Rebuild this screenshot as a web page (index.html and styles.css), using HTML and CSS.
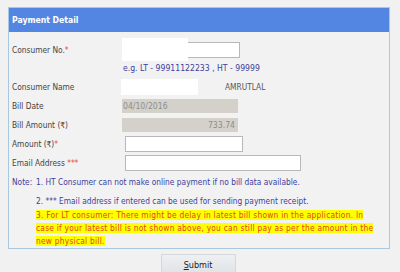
FILE: index.html
```html
<!DOCTYPE html>
<html lang="en">
<head>
  <meta charset="UTF-8">
  <title>Payment Detail</title>
  <link rel="stylesheet" href="styles.css">
</head>
<body>

  <div class="panel">
    <div class="panel-head">Payment Detail</div>
    <div class="panel-body">
      <div class="row">
        <label class="lbl">Consumer No.<span class="req">*</span></label>
        <div class="masked">
          <input type="text" class="txt w-short">
          <span class="mask mask-no"></span>
        </div>
      </div>
      <div class="row hint">e.g. LT - 99911122233 , HT - 99999</div>
      <div class="row">
        <label class="lbl">Consumer Name</label>
        <span class="mask-name"></span>
        <span class="name">AMRUTLAL</span>
      </div>
      <div class="row">
        <label class="lbl">Bill Date</label>
        <span class="ro">04/10/2016</span>
      </div>
      <div class="row">
        <label class="lbl">Bill Amount (&#8377;)</label>
        <span class="ro num">733.74</span>
      </div>
      <div class="row">
        <label class="lbl">Amount (&#8377;)<span class="req">*</span></label>
        <input type="text" class="txt w-short pushed">
      </div>
      <div class="row">
        <label class="lbl">Email Address <span class="req">***</span></label>
        <input type="text" class="txt w-long pushed">
      </div>

      <div class="notes">
        <div class="note"><span class="note-tag">Note:</span><span>1. HT Consumer can not make online payment if no bill data available.</span></div>
        <div class="note indent">2. *** Email address if entered can be used for sending payment receipt.</div>
        <div class="note indent warn"><span class="hl">3. For LT consumer: There might be delay in latest bill shown in the application. In case if your latest bill is not shown above, you can still pay as per the amount in the new physical bill.</span></div>
      </div>
    </div>
  </div>

  <div class="actions">
    <button type="button" class="btn"><u>S</u>ubmit</button>
  </div>

</body>
</html>
```

FILE: styles.css
```css
* { margin:0; padding:0; box-sizing:border-box; }
body {
  background:#f1f1f1;
  font-family: "DejaVu Sans Condensed", "DejaVu Sans", sans-serif;
  font-size: 8.3px;
  color:#444;
}

/* panel */
.panel {
  margin: 7px 0 0 8px;
  width: 382px;
  border: 1px solid #a9c7de;
  background:#f2f2f2;
}
.panel-head {
  background:#5385e2;
  color:#fff;
  font-weight:bold;
  height: 24px;
  line-height: 24px;
  padding-left: 3px;
  font-size: 8.6px;
}
.panel-body { padding: 8px 0 0 3px; }

/* rows */
.row {
  display:flex;
  align-items:center;
  height: 19px;
}
.lbl { width: 110px; flex-shrink:0; }
.req { color:#e8473b; }
.hint { padding-left: 111px; color:#3e3e9c; font-size: 8.6px; height: 18px; }

.txt {
  height: 16px;
  border: 1px solid #b8b8b8;
  background:#fff;
  font: inherit;
}
.w-short { width: 118px; }
.w-long { width: 176px; }
.pushed { margin-left: 3px; }

.masked { position: relative; }
.mask {
  position:absolute;
  background:#fff;
}
.mask-no { left:0; top:-4px; width:66px; height:23px; }

.mask-name {
  width: 77px;
  height: 16px;
  background:#fff;
  margin-left: -1px;
}
.name { margin-left: 27px; color:#555; }

.ro {
  width: 116px;
  height: 14px;
  line-height: 14px;
  background:#d4d1cb;
  color:#8d8d8d;
  padding: 0 3px 0 1px;
  font-size: 8.6px;
}
.num { text-align:right; }

/* notes */
.notes { color:#3e3e9c; }
.note { display:flex; min-height: 19px; align-items:center; }
.note-tag { width: 24px; flex-shrink:0; }
.indent { padding-left: 24px; }
.warn {
  display:block;
  line-height: 13px;
  padding-right: 8px;
  margin-top: -1px;
}
.hl { background:#ffff00; color:#e2461d; letter-spacing: 0.25px; }

/* button */
.actions { display:flex; justify-content:center; margin-top: 5px; padding-right: 4px; }
.btn {
  width: 75px;
  height: 21px;
  border: 1px solid #d4d8dc;
  background: linear-gradient(#eef0f2, #dfe3e6);
  color:#222;
  font-family: inherit;
  font-size: 9px;
}
```
